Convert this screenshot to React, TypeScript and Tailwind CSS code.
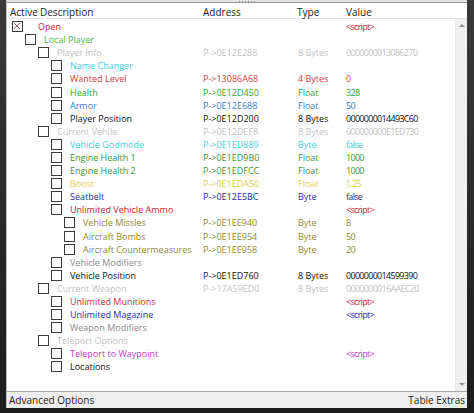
import React from "react";

type Row = {
  level: number;
  desc: string;
  color: string;
  addr?: string;
  type?: string;
  value?: string;
  checked?: boolean;
};

const GREY = "text-[#c2c2c2]";

const ROWS: Row[] = [
  { level: 0, desc: "Open", color: "text-[#c0282d]", value: "<script>", checked: true },
  { level: 1, desc: "Local Player", color: "text-[#45bd45]" },
  { level: 2, desc: "Player Info", color: GREY, addr: "P->0E12E288", type: "8 Bytes", value: "0000000013086270" },
  { level: 3, desc: "Name Changer", color: "text-[#3ccfe0]" },
  { level: 3, desc: "Wanted Level", color: "text-[#d23a44]", addr: "P->13086A68", type: "4 Bytes", value: "0" },
  { level: 3, desc: "Health", color: "text-[#2fa82f]", addr: "P->0E12D450", type: "Float", value: "328" },
  { level: 3, desc: "Armor", color: "text-[#3a7cc8]", addr: "P->0E12E688", type: "Float", value: "50" },
  { level: 3, desc: "Player Position", color: "text-[#111111]", addr: "P->0E12D200", type: "8 Bytes", value: "0000000014493C60" },
  { level: 2, desc: "Current Vehile", color: GREY, addr: "P->0E12DEF8", type: "8 Bytes", value: "000000000E1ED730" },
  { level: 3, desc: "Vehicle Godmode", color: "text-[#45d0e2]", addr: "P->0E1ED889", type: "Byte", value: "false" },
  { level: 3, desc: "Engine Health 1", color: "text-[#389838]", addr: "P->0E1ED9B0", type: "Float", value: "1000" },
  { level: 3, desc: "Engine Health 2", color: "text-[#389838]", addr: "P->0E1EDFCC", type: "Float", value: "1000" },
  { level: 3, desc: "Boost", color: "text-[#dbd04a]", addr: "P->0E1EDA50", type: "Float", value: "1.25" },
  { level: 3, desc: "Seatbelt", color: "text-[#2c2c96]", addr: "P->0E12E5BC", type: "Byte", value: "false" },
  { level: 3, desc: "Unlimited Vehicle Ammo", color: "text-[#c4262c]", value: "<script>" },
  { level: 4, desc: "Vehicle Missles", color: "text-[#8d8a2e]", addr: "P->0E1EE940", type: "Byte", value: "8" },
  { level: 4, desc: "Aircraft Bombs", color: "text-[#8d8a2e]", addr: "P->0E1EE954", type: "Byte", value: "50" },
  { level: 4, desc: "Aircraft Countermeasures", color: "text-[#8d8a2e]", addr: "P->0E1EE958", type: "Byte", value: "20" },
  { level: 3, desc: "Vehicle Modifiers", color: "text-[#8c8c8c]" },
  { level: 3, desc: "Vehicle Position", color: "text-[#111111]", addr: "P->0E1ED760", type: "8 Bytes", value: "0000000014599390" },
  { level: 2, desc: "Current Weapon", color: GREY, addr: "P->17A59ED0", type: "8 Bytes", value: "0000000016AAEC20" },
  { level: 3, desc: "Unlimited Munitions", color: "text-[#cc2a3a]", value: "<script>" },
  { level: 3, desc: "Unlimited Magazine", color: "text-[#2a2ab0]", value: "<script>" },
  { level: 3, desc: "Weapon Modifiers", color: "text-[#8a8a8a]" },
  { level: 2, desc: "Teleport Options", color: GREY },
  { level: 3, desc: "Teleport to Waypoint", color: "text-[#c23ac8]", value: "<script>" },
  { level: 3, desc: "Locations", color: "text-[#111111]" },
];

const INDENT = ["pl-[5px]", "pl-[18px]", "pl-[31px]", "pl-[44px]", "pl-[57px]"];

function Checkbox({ checked }: { checked?: boolean }) {
  return (
    <span className="relative h-[11px] w-[11px] shrink-0 border border-[#3c3c3c] bg-white">
      {checked && (
        <svg viewBox="0 0 11 11" className="absolute inset-0 h-full w-full">
          <path d="M1 1L8.5 8.5M8.5 1L1 8.5" stroke="#6b3030" strokeWidth="1" />
        </svg>
      )}
    </span>
  );
}

export default function App() {
  return (
    <div
      className="flex h-[413px] w-[474px] flex-col bg-[linear-gradient(180deg,#3a3a3a,#1c1c1c)] pb-[5px] pl-[6px] pr-[7px] text-[9px] leading-none"
      style={{ fontFamily: '"Open Sans", "Noto Sans", sans-serif' }}
    >
      <div className="flex min-h-0 flex-1 flex-col border-l border-[#bdbdbd] bg-white">
        {/* splitter strip */}
        <div className="flex h-[3px] justify-center border-b border-[#9a9a9a] bg-[#e4e4e4]">
          <span className="ml-[20px] mt-[1px] h-[1px] w-[16px] bg-[repeating-linear-gradient(90deg,#8a8a8a_0_1px,transparent_1px_3px)]" />
        </div>

        {/* column headers */}
        <div className="flex h-[16px] items-center border-b border-[#e3e3e3] pt-[3px] text-[10px] text-[#1b1b1b]">
          <span className="w-[33px] pl-[3px]">Active</span>
          <span className="w-[163px]">Description</span>
          <span className="w-[94px]">Address</span>
          <span className="w-[49px]">Type</span>
          <span>Value</span>
        </div>

        <div className="flex min-h-0 flex-1">
          <div className="flex-1 pt-[1px]">
            {ROWS.map((r) => (
              <div key={r.desc} className={`flex h-[13.1px] items-center ${r.color}`}>
                <div className={`flex w-[196px] items-center ${INDENT[r.level]}`}>
                  <Checkbox checked={r.checked} />
                  <span className={r.level === 0 ? "ml-[15px]" : "ml-[8px]"}>{r.desc}</span>
                </div>
                <span className="w-[95px]">{r.addr}</span>
                <span className="w-[48px]">{r.type}</span>
                <span className="tracking-[-0.7px]">{r.value}</span>
              </div>
            ))}
          </div>

          {/* scrollbar */}
          <div className="flex w-[12px] flex-col items-center justify-between border-l border-[#e8e8e8] bg-[#f0f0f0] py-[5px]">
            <span className="h-0 w-0 border-x-[3px] border-b-[3px] border-x-transparent border-b-[#8f8f8f]" />
            <span className="h-0 w-0 border-x-[3px] border-t-[3px] border-x-transparent border-t-[#8f8f8f]" />
          </div>
        </div>

        {/* bottom bar */}
        <div className="flex h-[17px] items-center justify-between border-t border-[#a8a8a8] bg-[#efefef] px-[2px] text-[10px] text-[#1b1b1b]">
          <span>Advanced Options</span>
          <span>Table Extras</span>
        </div>
      </div>
    </div>
  );
}
